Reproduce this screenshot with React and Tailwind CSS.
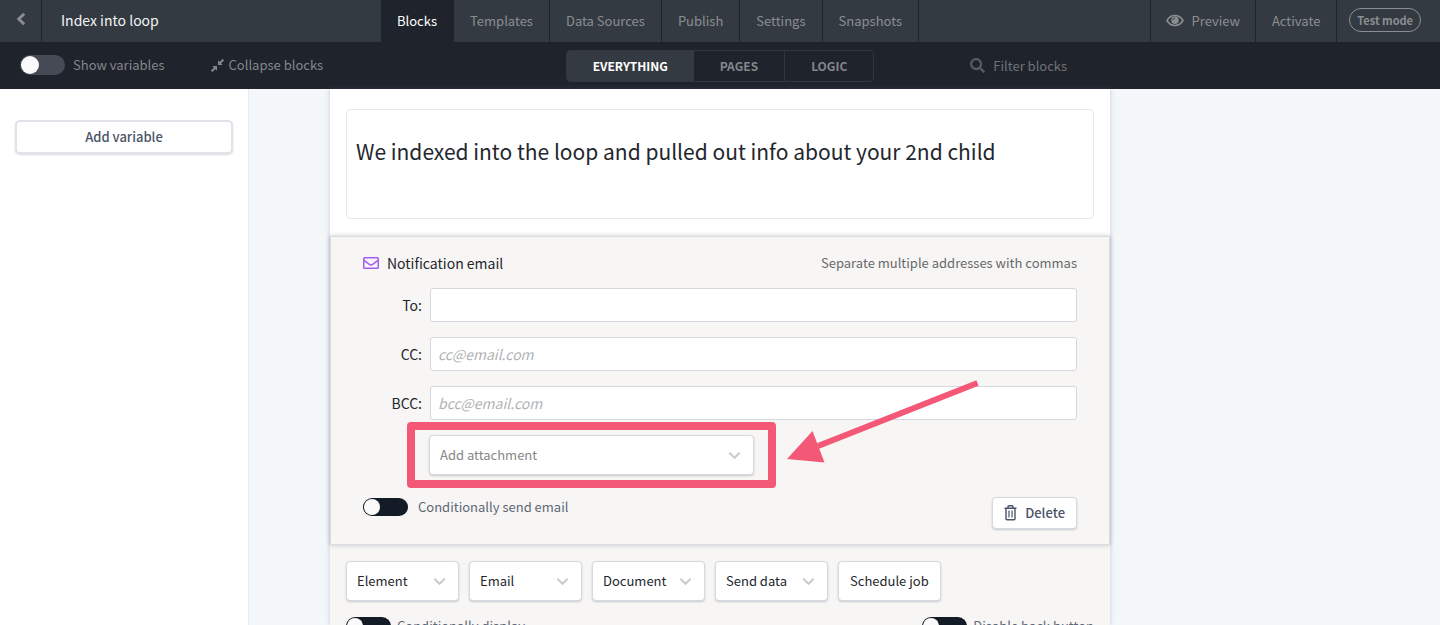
import React from "react";
import { FaSearch } from "react-icons/fa";

const TABS = ["Blocks", "Templates", "Data Sources", "Publish", "Settings", "Snapshots"];
const RECIPIENTS = [
  { id: "to", label: "To:", placeholder: "" },
  { id: "cc", label: "CC:", placeholder: "cc@email.com" },
  { id: "bcc", label: "BCC:", placeholder: "bcc@email.com" },
];
const ADD_MENUS = ["Element", "Email", "Document", "Send data"];

function BackIcon() {
  return (
    <svg className="h-[14px] w-[10px]" viewBox="0 0 10 14" fill="none" aria-hidden="true">
      <path d="M8.200 1.700L2.800 7l5.400 5.300" stroke="currentColor" strokeWidth="3" />
    </svg>
  );
}

function CollapseIcon() {
  return (
    <svg className="h-[13px] w-[13px]" viewBox="0 0 13 13" aria-hidden="true">
      <path d="M7 1.300V6h4.700zM1.300 7H6v4.700z" fill="currentColor" />
      <path d="M12.400 0.600L8.500 4.500M0.600 12.400l3.900-3.900" stroke="currentColor" strokeWidth="2" />
    </svg>
  );
}

function EyeIcon() {
  return (
    <svg className="h-4 w-[18px]" viewBox="0 0 18 16" fill="none" aria-hidden="true">
      <path d="M1 7.500C2.800 4.300 5.700 2.500 9 2.500s6.200 1.800 8 5c-1.800 3.200-4.700 5-8 5s-6.200-1.800-8-5z" stroke="currentColor" strokeWidth="1.600" />
      <circle cx="9" cy="7.200" r="3.700" fill="currentColor" />
      <path d="M6.900 7.200A2.100 2.100 0 0 1 9 5.100" stroke="#343a41" strokeWidth="0.900" />
    </svg>
  );
}

function MailIcon() {
  return (
    <svg className="h-3 w-4 text-[#a55cf5]" viewBox="0 0 16 12" fill="none" stroke="currentColor" aria-hidden="true">
      <rect x="0.750" y="0.750" width="14.500" height="10.500" rx="0.800" strokeWidth="1.500" />
      <path d="M1 3.400l5.400 4c1 .7 2.200.7 3.200 0l5.400-4" strokeWidth="1.500" />
    </svg>
  );
}

function TrashIcon() {
  return (
    <svg className="h-4 w-[13px]" viewBox="0 0 13 16" fill="none" stroke="currentColor" aria-hidden="true">
      <path d="M0.500 3.300h12M4 3V1.800c0-.6.400-1 1-1h3c.6 0 1 .4 1 1V3M2 3.500v10.200c0 .6.400 1 1 1h7c.6 0 1-.4 1-1V3.500" strokeWidth="1.400" />
      <path d="M5 5.500v7M8 5.500v7" strokeWidth="1.200" />
    </svg>
  );
}

function Chevron() {
  return (
    <svg className="pointer-events-none absolute right-[13px] top-4 h-[9px] w-[13px] text-[#c9cbcd]" viewBox="0 0 13 9" fill="none" aria-hidden="true">
      <path d="M1.300 1.800l5.200 5 5.200-5" stroke="currentColor" strokeWidth="2.200" />
    </svg>
  );
}

function Toggle({ id, label, variant }) {
  const track =
    variant === "dark"
      ? "h-5 bg-[#454a54] before:h-[18px] before:w-[18px]"
      : "h-[18px] bg-[#121b26] before:h-4 before:w-4";
  const text =
    variant === "dark" ? "gap-2 text-[#83878c]" : variant === "wide" ? "gap-[10px] text-[#5f6776]" : "gap-[6px] text-[#5f6776]";
  return (
    <label htmlFor={id} className={"flex items-center text-[13px] leading-5 " + text}>
      <input
        id={id}
        type="checkbox"
        className={"flex w-[45px] appearance-none items-center rounded-full px-px before:rounded-full before:bg-[#fafafa] checked:justify-end " + track}
      />
      {label}
    </label>
  );
}

function MenuSelect({ label, className }) {
  return (
    <div className={"relative " + className}>
      <select
        aria-label={label}
        className="h-10 w-full appearance-none rounded-[4px] border border-[#d5dae2] bg-white pl-[10px] pr-8 text-[13px] leading-5 shadow-[0_1px_2px_rgba(60,66,87,0.25)]"
      >
        <option>{label}</option>
      </select>
      <Chevron />
    </div>
  );
}

function TopBar() {
  return (
    <header className="flex h-[42px] shrink-0 bg-[#343a41] text-[13px] leading-5 text-[#8a8e92]">
      <a href="#back" aria-label="Back" className="flex w-[42px] items-center justify-center border-r border-[#1f232b] pb-1">
        <BackIcon />
      </a>
      <h1 className="flex w-[339px] items-center px-[19px] pb-0.5 text-[14px] leading-5 text-[#f3f4f5]">Index into loop</h1>
      <nav className="flex">
        {TABS.map((tab, i) => (
          <a
            key={tab}
            href={"#" + tab.toLowerCase().replace(" ", "-")}
            className={"flex items-center border-r border-[#1f232b] px-4 " + (i === 0 ? "bg-[#1f232b] text-white" : "")}
          >
            {tab}
          </a>
        ))}
      </nav>
      <div className="ml-auto flex">
        <a href="#preview" className="flex items-center gap-2 border-x border-[#1f232b] px-[15px]">
          <EyeIcon />
          Preview
        </a>
        <a href="#activate" className="flex items-center border-r border-[#1f232b] px-4">Activate</a>
        <div className="flex items-center pb-0.5 pl-3 pr-[19px]">
          <button className="h-6 rounded-full border border-[#8a8e92] px-[7px] text-[11px] font-bold leading-5">Test mode</button>
        </div>
      </div>
    </header>
  );
}

function FilterBar() {
  return (
    <div className="grid h-[47px] shrink-0 grid-cols-[1fr_auto_1fr] items-center bg-[#1f232b] text-[13px] leading-5 text-[#83878c]">
      <div className="flex items-center gap-[46px] pb-px pl-5">
        <Toggle id="show-variables" label="Show variables" variant="dark" />
        <button className="flex items-center gap-[5px]">
          <CollapseIcon />
          Collapse blocks
        </button>
      </div>
      <div className="flex h-8 overflow-hidden rounded-[4px] border border-[#32373f] text-[12px] font-bold">
        <button className="bg-[#343a41] px-[26px] text-white">EVERYTHING</button>
        <button className="border-r border-[#32373f] px-[26px]">PAGES</button>
        <button className="px-[26px]">LOGIC</button>
      </div>
      <label htmlFor="filter" className="flex items-center gap-2 pl-24">
        <FaSearch className="h-[15px] w-[15px] text-[#555a62]" />
        <span className="sr-only">Filter blocks</span>
        <input id="filter" placeholder="Filter blocks" className="h-8 min-w-0 bg-transparent leading-6 outline-none placeholder:text-[#6f7378]" />
      </label>
    </div>
  );
}

function NotificationBlock() {
  return (
    <section className="relative border border-[#d9dde2] bg-[#f7f6f4] px-8 pb-[15px] pt-[14px] shadow-[0_0_4px_rgba(60,66,87,0.3)]">
      <div className="flex items-center justify-between">
        <h2 className="flex items-center gap-2 text-[14px] leading-6 text-[#23272d]">
          <MailIcon />
          Notification email
        </h2>
        <p className="text-[13px] leading-6 text-[#67696c]">Separate multiple addresses with commas</p>
      </div>
      <div className="mt-[13px] flex flex-col gap-[15px]">
        {RECIPIENTS.map((field) => (
          <div key={field.id} className="flex items-center gap-2">
            <label htmlFor={field.id} className="w-[59px] text-right text-[14px] leading-5 text-[#23272d]">{field.label}</label>
            <input
              id={field.id}
              placeholder={field.placeholder}
              className="h-[34px] min-w-0 flex-1 rounded-[3px] border border-[#d2d8de] bg-white px-[7px] text-[14px] leading-5 placeholder:italic placeholder:text-[#b0b2b4]"
            />
          </div>
        ))}
        <div className="relative ml-[66px] w-[325px] text-[#85878a]">
          <MenuSelect label="Add attachment" className="w-full" />
          <div className="pointer-events-none absolute -inset-x-[22px] -inset-y-[13px] rounded-[4px] border-8 border-[#f45877]" />
          <svg className="pointer-events-none absolute -top-14 left-[358px] h-[86px] w-[194px]" viewBox="0 0 194 86" aria-hidden="true">
            <path d="M190.500 4L31 67" stroke="#f45877" strokeWidth="6" />
            <path d="M0 80L25.500 52L37.500 83.500Z" fill="#f45877" />
          </svg>
        </div>
      </div>
      <div className="mt-[22px] flex items-start justify-between">
        <Toggle id="conditional-email" label="Conditionally send email" variant="wide" />
        <button className="flex h-8 items-center gap-2 rounded-[4px] border border-[#d5dae2] bg-white px-[11px] text-[13px] font-medium leading-5 text-[#4b5368] shadow-[0_1px_2px_rgba(60,66,87,0.25)]">
          <TrashIcon />
          Delete
        </button>
      </div>
    </section>
  );
}

export default function App() {
  return (
    <div className="flex h-screen flex-col overflow-hidden bg-[#f4f7fa] font-['Noto_Sans_CJK_SC','Noto_Sans_CJK_JP',sans-serif]">
      <TopBar />
      <FilterBar />
      <div className="grid min-h-0 flex-1 grid-cols-[1fr_780px_1fr]">
        <aside className="w-[249px] border-r border-[#e6eaef] bg-white px-[15px] pt-[31px]">
          <button className="h-[34px] w-full rounded-[5px] border-2 border-[#e0e4ea] bg-white text-[13px] font-medium leading-5 text-[#4b5368] shadow-[0_1px_2px_rgba(60,66,87,0.2)]">
            Add variable
          </button>
        </aside>
        <main className="min-h-0 bg-[#f7f6f4] shadow-[0_0_5px_rgba(80,100,150,0.3)]">
          <div className="bg-white px-4 pb-[17px] pt-5">
            <div className="h-[110px] rounded-[4px] border border-[#e4e9f0] px-[9px] pt-[25px]">
              <p className="text-[21px] leading-8 text-[#23272d]">We indexed into the loop and pulled out info about your 2nd child</p>
            </div>
          </div>
          <NotificationBlock />
          <div className="px-4 pt-4">
            <div className="flex gap-[10px] text-[#23272d]">
              {ADD_MENUS.map((label) => (
                <MenuSelect key={label} label={label} className="w-[113px]" />
              ))}
              <button className="h-10 rounded-[4px] border border-[#d5dae2] bg-white px-[11px] text-[13px] leading-5 shadow-[0_1px_2px_rgba(60,66,87,0.25)]">
                Schedule job
              </button>
            </div>
            <div className="mt-[15px] flex justify-between">
              <Toggle id="conditional-display" label="Conditionally display" />
              <Toggle id="disable-back" label="Disable back button" />
            </div>
          </div>
        </main>
      </div>
    </div>
  );
}
